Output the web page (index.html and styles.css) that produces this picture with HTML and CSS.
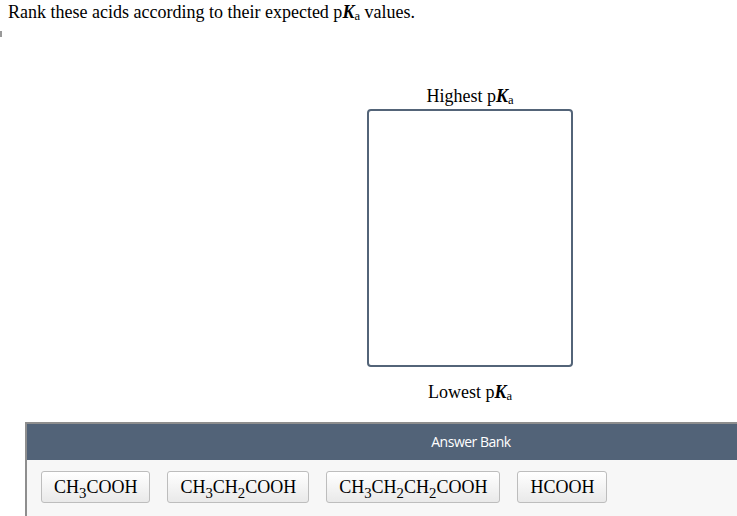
FILE: index.html
```html
<!DOCTYPE html>
<html lang="en">
<head>
    <meta charset="UTF-8">
    <meta name="viewport" content="width=device-width, initial-scale=1.0">
    <title>Rank acids by pKa</title>
    <link rel="stylesheet" href="styles.css">
</head>
<body>

    <p class="question">Rank these acids according to their expected p<i class="var">K</i><sub>a</sub> values.</p>
    <span class="edge-mark"></span>

    <div class="workspace">
        <div class="ranking">
            <div class="rank-label">Highest p<i class="var">K</i><sub>a</sub></div>
            <div class="drop-zone"></div>
            <div class="rank-label">Lowest p<i class="var">K</i><sub>a</sub></div>
        </div>

        <div class="answer-bank">
            <div class="bank-title">Answer Bank</div>
            <div class="bank-items">
                <button class="chip">CH<sub>3</sub>COOH</button>
                <button class="chip">CH<sub>3</sub>CH<sub>2</sub>COOH</button>
                <button class="chip">CH<sub>3</sub>CH<sub>2</sub>CH<sub>2</sub>COOH</button>
                <button class="chip">HCOOH</button>
            </div>
        </div>
    </div>

</body>
</html>
```

FILE: styles.css
```css
html, body {
    overflow: hidden;
}
body {
    margin: 0;
    font-family: "Liberation Serif", "Times New Roman", serif;
    color: #000;
    background: #fff;
    position: relative;
}
sub {
    font-size: 70%;
    vertical-align: -0.15em;
    line-height: 0;
}
.var {
    font-weight: bold;
}
.question {
    margin: 0;
    padding: 2px 0 0 8px;
    font-size: 18px;
    line-height: 20px;
}
.edge-mark {
    position: absolute;
    left: 0;
    top: 31px;
    width: 2px;
    height: 6px;
    background: #999;
}
.workspace {
    width: 890px;
    margin-left: 25px;
}
.ranking {
    display: flex;
    flex-direction: column;
    align-items: center;
    padding-top: 64px;
}
.rank-label {
    font-size: 18px;
    line-height: 20px;
    height: 20px;
}
.ranking .drop-zone {
    margin: 3px 0 15px;
}
.drop-zone {
    width: 202px;
    height: 254px;
    border: 2px solid #536478;
    border-radius: 4px;
}
.answer-bank {
    margin-top: 20px;
    border-top: 2px solid #8e8e8e;
    border-left: 2px solid #8e8e8e;
    background: #f7f7f7;
    height: 120px;
}
.bank-title {
    background: #526378;
    color: #fff;
    text-align: center;
    font-family: "Open Sans", sans-serif;
    font-size: 14px;
    letter-spacing: -0.5px;
    height: 36px;
    line-height: 36px;
}
.bank-items {
    display: flex;
    gap: 17px;
    padding: 11px 0 0 14px;
}
.chip {
    font-family: "Liberation Serif", "Times New Roman", serif;
    font-size: 18px;
    color: #000;
    height: 32px;
    padding: 0 12px;
    border: 1px solid #bdbdbd;
    border-radius: 3px;
    background: linear-gradient(#ffffff, #e9e9e9);
    cursor: pointer;
}
.chip sub {
    font-size: 82%;
    vertical-align: -0.35em;
}
```
